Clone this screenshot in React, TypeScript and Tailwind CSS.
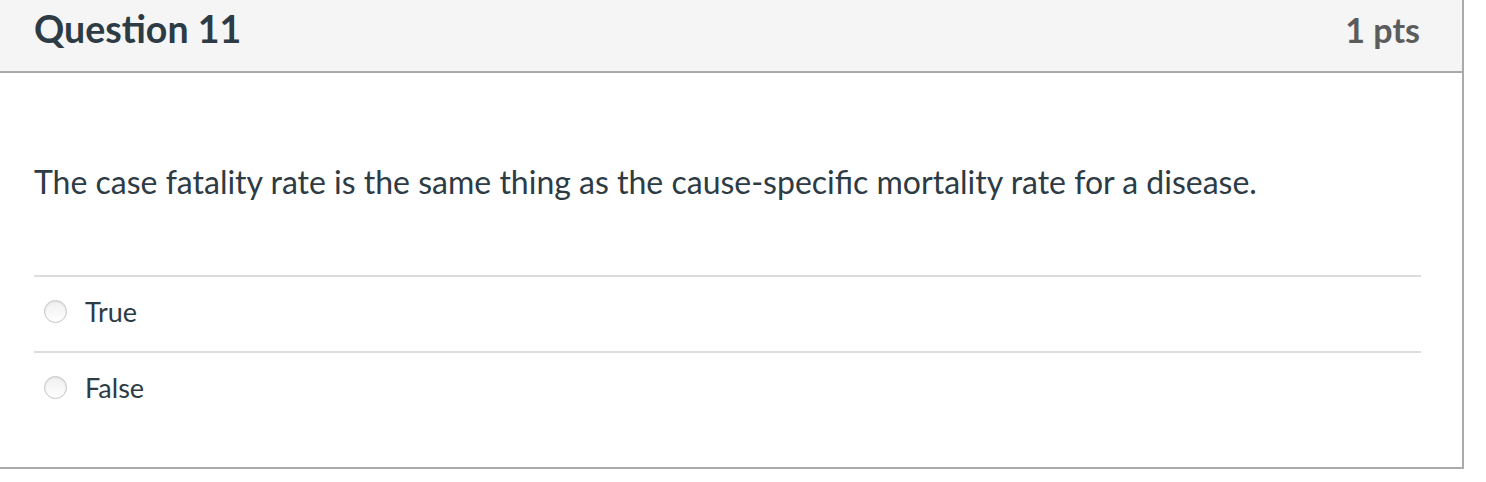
import React from "react";

function Radio() {
  return (
    <span className="inline-block shrink-0 w-[23px] h-[23px] rounded-full border border-[#c4c4c4] bg-gradient-to-b from-[#f0f0f0] to-white shadow-[inset_0_1px_2px_rgba(0,0,0,0.08)]" />
  );
}

export default function App() {
  const options = ["True", "False"];
  return (
    <div className="w-[1486px] h-[482px] bg-white font-['Lato','Liberation_Sans',sans-serif] text-[#2d3b45]">
      <div className="w-[1464px] border-r-2 border-b-2 border-[#aaaaaa]">
        <div className="h-[73px] bg-[#f5f5f5] border-b-2 border-[#aaaaaa] flex items-center justify-between pl-[34px] pr-[42px] pb-[14px]">
          <span className="text-[37.5px] font-bold leading-none">Question 11</span>
          <span className="text-[34px] font-bold leading-none text-[#5c5c5c] mt-[3px]">1 pts</span>
        </div>
        <div className="pl-[34px] pr-[41px]">
          <p className="text-[32px] leading-none pt-[93px] pb-[77px]">
            The case fatality rate is the same thing as the cause-specific mortality rate for a disease.
          </p>
          <div>
            {options.map((o) => (
              <div key={o} className="border-t-2 border-[#dddddd] h-[76px] flex items-center pl-[10px] pb-[6px]">
                <Radio />
                <span className="ml-[18px] text-[27px] leading-none">{o}</span>
              </div>
            ))}
          </div>
          <div className="h-[40px]" />
        </div>
      </div>
    </div>
  );
}
